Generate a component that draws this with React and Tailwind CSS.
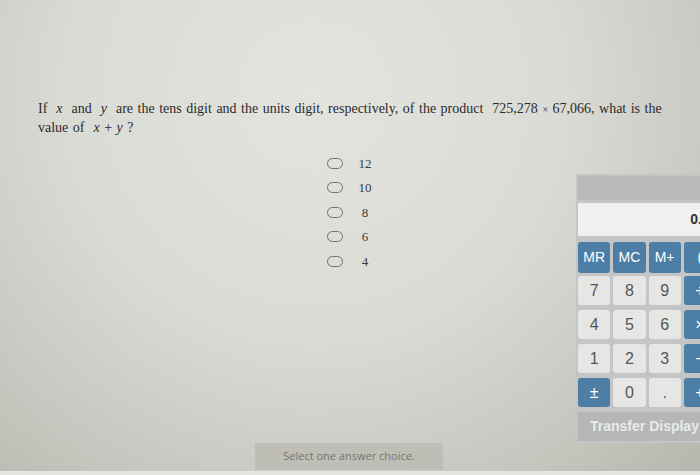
import React from 'react';

const choices = ['12', '10', '8', '6', '4'];

const keyRows = [
    ['7', '8', '9', '÷'],
    ['4', '5', '6', '×'],
    ['1', '2', '3', '−'],
    ['±', '0', '.', '+'],
];

const Calculator = () => {
    return (
        <div className="absolute left-[576px] top-[174px] w-[142px] bg-[#c3c6c4] p-[2px] font-['Liberation_Sans',sans-serif]">
            <div className="h-[24px] bg-[#b8bbba]"></div>
            <div className="mt-[3px] h-[33px] bg-[#f0f1ef] flex items-center justify-end pr-[14px] text-[14px] font-bold text-[#333]">
                0.
            </div>
            <div className="mt-[6px] grid grid-cols-4 gap-[3px]">
                {['MR', 'MC', 'M+', '('].map((k) => (
                    <div key={k} className="h-[31px] rounded-[3px] bg-[#4d7ea6] text-white text-[14px] flex items-center justify-center">
                        {k}
                    </div>
                ))}
            </div>
            <div className="mt-[3px] flex flex-col gap-[5px]">
                {keyRows.map((row, i) => (
                    <div key={i} className="grid grid-cols-4 gap-[3px]">
                        {row.map((k, j) => {
                            const blue = j === 3 || k === '±';
                            return (
                                <div
                                    key={k}
                                    className={
                                        blue
                                            ? 'h-[29px] rounded-[3px] bg-[#4d7ea6] text-white text-[16px] flex items-center justify-center'
                                            : 'h-[29px] rounded-[3px] bg-[#e6e7e4] text-[#555] text-[16px] flex items-center justify-center'
                                    }
                                >
                                    {k}
                                </div>
                            );
                        })}
                    </div>
                ))}
            </div>
            <div className="mt-[5px] h-[29px] bg-[#b4b7b5] flex items-center pl-[12px] text-[14px] font-bold text-[#e9ebea] whitespace-nowrap">
                Transfer Display
            </div>
        </div>
    );
};

const App = () => {
    return (
        <div className="relative w-[700px] h-[475px] overflow-hidden flex flex-col bg-[radial-gradient(ellipse_at_45%_20%,#e3e4df_0%,#dadbd5_45%,#c4c5bd_80%,#b5b6ae_100%)]">
            <div className="flex-1 flex flex-col">
                <p className="ml-[38px] mt-[100px] w-[640px] font-['Liberation_Serif',serif] text-[14px] leading-[18px] [word-spacing:1px] text-[#2b2b2b]">
                    If&nbsp; <i>x</i>&nbsp; and&nbsp; <i>y</i>&nbsp; are the tens digit and the units digit, respectively, of the product&nbsp; 725,278 <span className="text-[10px]">×</span> 67,066, what is the value of&nbsp; <i>x</i> + <i>y</i> ?
                </p>
                <div className="ml-[327px] mt-[20px] flex flex-col gap-[12px]">
                    {choices.map((c) => (
                        <div key={c} className="flex items-center h-[12.5px]">
                            <div className="w-[16px] h-[11px] rounded-full border border-[#707070]"></div>
                            <span className="w-[16px] ml-[14px] text-center font-['Liberation_Serif',serif] text-[13px] text-[#3c3c3c]">
                                {c}
                            </span>
                        </div>
                    ))}
                </div>
                <div className="flex-1"></div>
                <div className="ml-[255px] mb-[1px] w-[188px] h-[27px] bg-[#bebeb6] flex items-center justify-center font-['Open_Sans',sans-serif] text-[11px] text-[#75756f]">
                    Select one answer choice.
                </div>
            </div>
            <div className="h-[4px] bg-[#e6e6e0]"></div>
            <Calculator />
        </div>
    );
};

export default App;
